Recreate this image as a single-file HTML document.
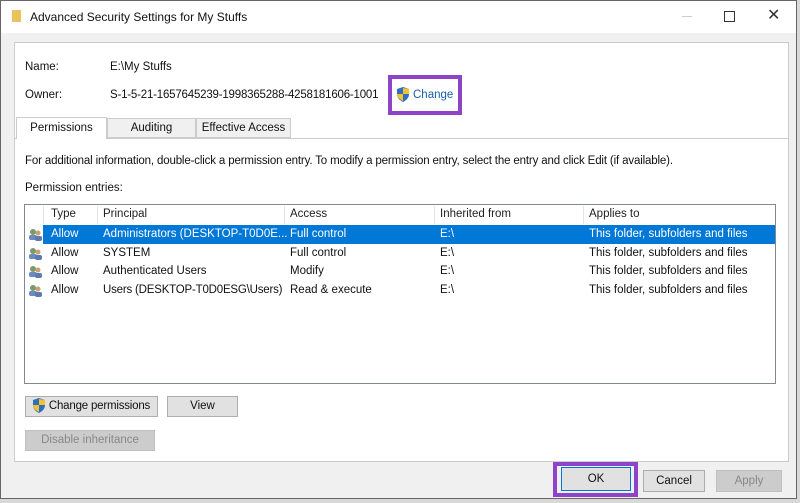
<!DOCTYPE html><html><head><style>
body{margin:0;width:800px;height:503px;background:#d8d8d8;font-family:"Liberation Sans",sans-serif;font-size:11.5px;color:#111;position:relative;overflow:hidden}
.a{position:absolute}
.win{left:0;top:0;width:797px;height:499px;background:#f0f0f0;border:1px solid #666;box-sizing:border-box}
.btn{position:absolute;background:#e1e1e1;border:1px solid #adadad;box-sizing:border-box;text-align:center;line-height:19px}
.row{position:absolute;left:25px;width:750px;height:19px;line-height:19px}
.row span{position:absolute}
</style></head><body>
<div class="a win"></div>
<div class="a" style="left:1px;top:1px;width:795px;height:32px;background:#fff"></div>
<div class="a" style="left:12px;top:10px;width:9px;height:12px;background:#e8c25a"></div>
<div class="a" style="left:30px;top:10px;font-size:12px">Advanced Security Settings for My Stuffs</div>
<div class="a" style="left:682px;top:16px;width:10px;height:1px;background:#ccc"></div>
<div class="a" style="left:724px;top:11px;width:9px;height:9px;border:1px solid #333"></div>
<div class="a" style="left:767px;top:5px;font-size:16px;color:#333">✕</div>
<div class="a" style="left:14px;top:42px;width:775px;height:420px;background:#fff;border:1px solid #ccc;box-sizing:border-box"></div>
<div class="a" style="left:25px;top:61px">Name:</div>
<div class="a" style="left:110px;top:61px">E:\My Stuffs</div>
<div class="a" style="left:25px;top:89px">Owner:</div>
<div class="a" style="left:110px;top:89px;letter-spacing:-0.2px">S-1-5-21-1657645239-1998365288-4258181606-1001</div>
<div class="a" style="left:388px;top:75px;width:74px;height:40px;border:4px solid #8e44c9;box-sizing:border-box"></div>
<svg class="a" style="left:396px;top:87px" width="14" height="15" viewBox="0 0 14 15"><path d="M7 0L13 2V7C13 11 10 13.5 7 15C4 13.5 1 11 1 7V2Z" fill="#2f6fbf"/><path d="M7 1V7H13V2Z M1 7H7V14C4 12.5 1 10.5 1 7Z" fill="#f2c230"/></svg>
<div class="a" style="left:413px;top:89px;color:#1a5fa8">Change</div>
<div class="a" style="left:14px;top:138px;width:775px;height:1px;background:#ccc"></div>
<div class="a" style="left:16px;top:117px;width:91px;height:22px;background:#fff;border:1px solid #ccc;border-bottom:none;box-sizing:border-box;text-align:center;line-height:20px">Permissions</div>
<div class="a" style="left:107px;top:118px;width:89px;height:20px;background:#f0f0f0;border:1px solid #ccc;box-sizing:border-box;text-align:center;line-height:18px">Auditing</div>
<div class="a" style="left:196px;top:118px;width:95px;height:20px;background:#f0f0f0;border:1px solid #ccc;box-sizing:border-box;text-align:center;line-height:18px">Effective Access</div>
<div class="a" style="left:25px;top:155px;letter-spacing:-0.15px">For additional information, double-click a permission entry. To modify a permission entry, select the entry and click Edit (if available).</div>
<div class="a" style="left:25px;top:182px">Permission entries:</div>
<div class="a" style="left:24px;top:204px;width:752px;height:180px;border:1px solid #828790;box-sizing:border-box;background:#fff"></div>
<div class="row" style="top:205px;color:#222"><span style="left:26px">Type</span><span style="left:78px">Principal</span><span style="left:265px">Access</span><span style="left:415px">Inherited from</span><span style="left:564px">Applies to</span></div>
<div class="a" style="left:43px;top:206px;width:1px;height:18px;background:#e5e5e5"></div>
<div class="a" style="left:97px;top:206px;width:1px;height:18px;background:#e5e5e5"></div>
<div class="a" style="left:284px;top:206px;width:1px;height:18px;background:#e5e5e5"></div>
<div class="a" style="left:434px;top:206px;width:1px;height:18px;background:#e5e5e5"></div>
<div class="a" style="left:583px;top:206px;width:1px;height:18px;background:#e5e5e5"></div>
<div class="a" style="left:43px;top:225px;width:732px;height:19px;background:#0078d7"></div>
<div class="row" style="top:225px;color:#fff"><span style="left:26px">Allow</span><span style="left:78px">Administrators (DESKTOP-T0D0E...</span><span style="left:265px">Full control</span><span style="left:415px">E:\</span><span style="left:564px">This folder, subfolders and files</span></div>
<div class="row" style="top:244px"><span style="left:26px">Allow</span><span style="left:78px">SYSTEM</span><span style="left:265px">Full control</span><span style="left:415px">E:\</span><span style="left:564px">This folder, subfolders and files</span></div>
<div class="row" style="top:262px"><span style="left:26px">Allow</span><span style="left:78px">Authenticated Users</span><span style="left:265px">Modify</span><span style="left:415px">E:\</span><span style="left:564px">This folder, subfolders and files</span></div>
<div class="row" style="top:281px"><span style="left:26px">Allow</span><span style="left:78px;letter-spacing:-0.2px">Users (DESKTOP-T0D0ESG\Users)</span><span style="left:265px">Read &amp; execute</span><span style="left:415px">E:\</span><span style="left:564px">This folder, subfolders and files</span></div>
<svg class="a" style="left:28px;top:228px" width="14" height="70"><g id="u"><circle cx="5" cy="4" r="3" fill="#7a9a6a"/><rect x="1" y="7" width="8" height="5" rx="2" fill="#6a8ac0"/><circle cx="10" cy="5" r="2.5" fill="#c9a070"/><rect x="7" y="8" width="7" height="5" rx="2" fill="#5a7ab0"/></g><use href="#u" y="19"/><use href="#u" y="37"/><use href="#u" y="56"/></svg>
<div class="btn" style="left:25px;top:396px;width:133px;height:21px;padding-left:16px;letter-spacing:-0.2px">Change permissions</div>
<svg class="a" style="left:32px;top:398px" width="14" height="15" viewBox="0 0 14 15"><path d="M7 0L13 2V7C13 11 10 13.5 7 15C4 13.5 1 11 1 7V2Z" fill="#2f6fbf"/><path d="M7 1V7H13V2Z M1 7H7V14C4 12.5 1 10.5 1 7Z" fill="#f2c230"/></svg>
<div class="btn" style="left:167px;top:396px;width:71px;height:21px">View</div>
<div class="btn" style="left:25px;top:430px;width:130px;height:21px;background:#ccc;border-color:#bfbfbf;color:#888">Disable inheritance</div>
<div class="a" style="left:553px;top:462px;width:85px;height:35px;border:4px solid #8e44c9;box-sizing:border-box"></div>
<div class="btn" style="left:561px;top:467px;width:70px;height:24px;border:1px solid #0078d7;line-height:22px">OK</div>
<div class="btn" style="left:643px;top:470px;width:62px;height:22px;line-height:20px">Cancel</div>
<div class="btn" style="left:716px;top:470px;width:66px;height:22px;line-height:20px;background:#ccc;border-color:#bfbfbf;color:#888">Apply</div>
</body></html>
